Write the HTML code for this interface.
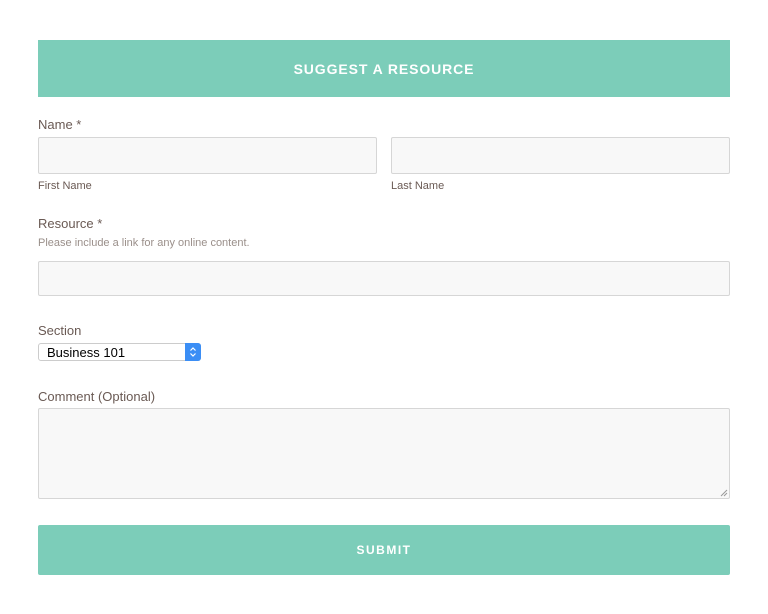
<!DOCTYPE html>
<html><head><style>
body{margin:0;width:768px;height:614px;background:#fff;font-family:"Liberation Sans",sans-serif;position:relative;overflow:hidden}
.a{position:absolute}
.hdr{left:38px;top:40px;width:692px;height:57px;background:#7ccdb9;color:#fff;font-size:14px;font-weight:bold;letter-spacing:0.9px;text-align:center;line-height:58px}
.lbl{color:#6a5a54;font-size:13px}
.sm{color:#6a5a54;font-size:11px}
.inp{background:#f8f8f8;border:1px solid #d6d6d6;border-radius:2px;box-sizing:border-box}
</style></head><body>
<div class="a hdr">SUGGEST A RESOURCE</div>
<div class="a lbl" style="left:38px;top:117px">Name *</div>
<div class="a inp" style="left:38px;top:137px;width:339px;height:37px"></div>
<div class="a inp" style="left:391px;top:137px;width:339px;height:37px"></div>
<div class="a sm" style="left:38px;top:180px">First Name</div>
<div class="a sm" style="left:391px;top:180px">Last Name</div>
<div class="a lbl" style="left:38px;top:216px">Resource *</div>
<div class="a sm" style="left:38px;top:237px;color:#9a8f8a">Please include a link for any online content.</div>
<div class="a inp" style="left:38px;top:261px;width:692px;height:35px"></div>
<div class="a lbl" style="left:38px;top:323px">Section</div>
<div class="a" style="left:38px;top:343px;width:163px;height:18px;border:1px solid #ccc;border-radius:3px;box-sizing:border-box;background:#fff;font-size:13px;line-height:17px;padding-left:8px;color:#000">Business 101
<div class="a" style="right:-1px;top:-1px;width:16px;height:18px;background:#3b8ef5;border-radius:0 3px 3px 0"><svg width="16" height="18"><path d="M5.5 7.5L8 5l2.5 2.5M5.5 10.5L8 13l2.5-2.5" stroke="#fff" stroke-width="1.2" fill="none"/></svg></div></div>
<div class="a lbl" style="left:38px;top:389px">Comment (Optional)</div>
<div class="a inp" style="left:38px;top:408px;width:692px;height:91px"><svg class="a" style="right:1px;bottom:1px" width="8" height="8"><path d="M7 1L1 7M7 4L4 7" stroke="#999" stroke-width="1"/></svg></div>
<div class="a" style="left:38px;top:525px;width:692px;height:50px;background:#7ccdb9;border-radius:2px;color:#fff;font-size:12px;font-weight:bold;letter-spacing:1.5px;text-align:center;line-height:50px">SUBMIT</div>
</body></html>
